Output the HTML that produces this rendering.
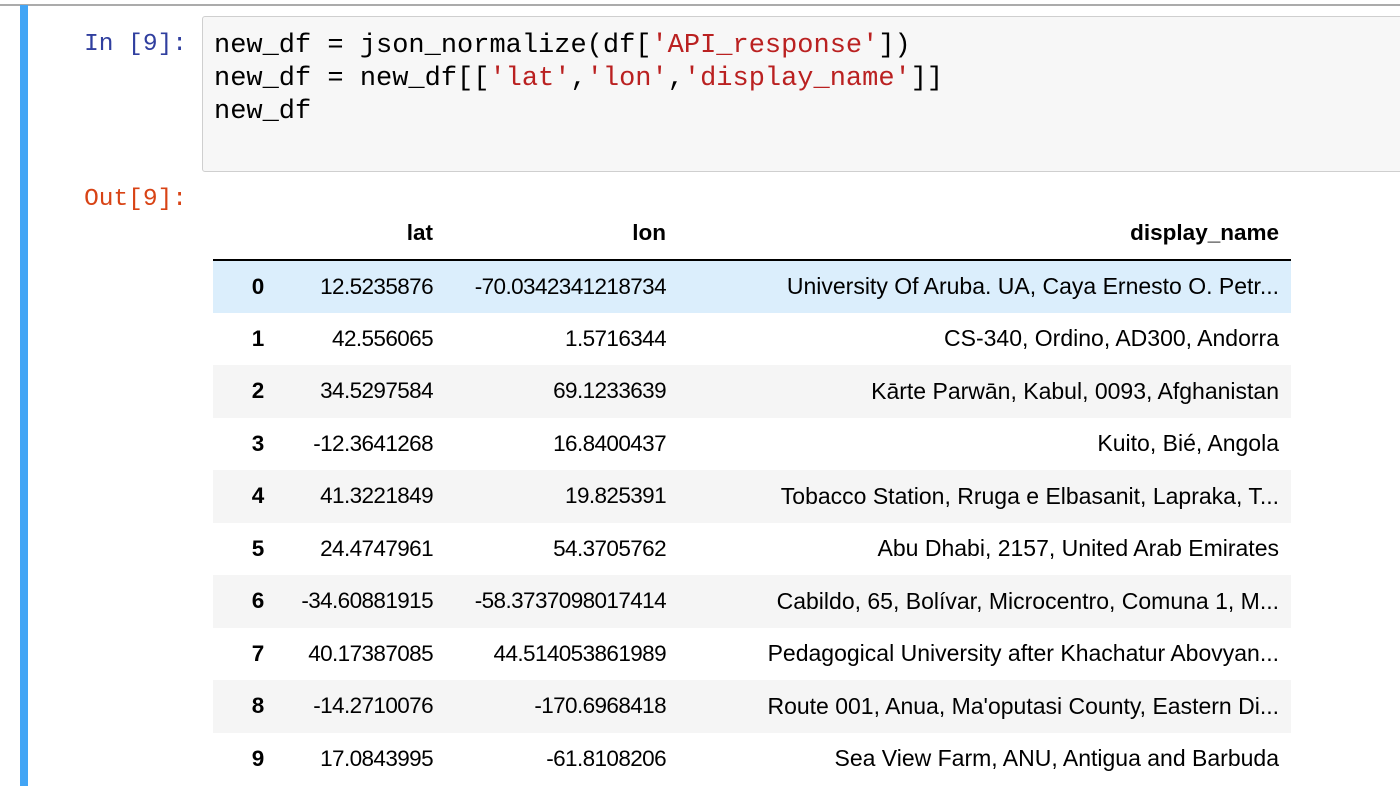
<!DOCTYPE html><html><head><style>
html,body{margin:0;width:1400px;height:786px;overflow:hidden;background:#fff;position:relative;font-family:"Liberation Sans",sans-serif}
.top{position:absolute;left:0;top:4px;width:1400px;height:2px;background:#ababab}
.bar{position:absolute;left:20px;top:5px;width:8px;height:781px;background:#42a5f5}
.pr{position:absolute;font-family:"Liberation Mono",monospace;font-size:24.5px;text-align:right;width:200px}
.code{position:absolute;left:202px;top:16px;width:1210px;height:156px;border:1px solid #cfcfcf;background:#f7f7f7;border-radius:3px;box-sizing:border-box}
.code pre{margin:0;position:absolute;left:11px;top:13px;font-family:"Liberation Mono",monospace;font-size:27px;line-height:33px;color:#000}
.s{color:#ba2121}
table{position:absolute;left:213px;top:207px;border-collapse:collapse;table-layout:fixed;width:1078px;font-size:22.5px;color:#000}
td,th{text-align:right;height:52.5px;padding:0 12px 0 0;box-sizing:border-box;white-space:nowrap;overflow:hidden}
th{font-weight:bold}
thead th{height:53px;border-bottom:2px solid #000}
tbody tr:nth-child(odd){background:#f5f5f5}
tbody tr:first-child{background:#dbeefc}
tbody th{text-align:center;padding:0 0 0 14px}
tbody td{letter-spacing:-0.6px}
tbody td:last-child{letter-spacing:0;font-size:23px}
</style></head><body>
<div class="top"></div><div class="bar"></div>
<div class="pr" style="left:-13px;top:31px;color:#303f9f">In [9]:</div>
<div class="pr" style="left:-13px;top:186px;color:#d84315">Out[9]:</div>
<div class="code"><pre>new_df = json_normalize(df[<span class="s">'API_response'</span>])
new_df = new_df[[<span class="s">'lat'</span>,<span class="s">'lon'</span>,<span class="s">'display_name'</span>]]
new_df</pre></div>
<table><colgroup><col style="width:76px"><col style="width:156px"><col style="width:233px"><col style="width:613px"></colgroup>
<thead><tr><th></th><th>lat</th><th>lon</th><th>display_name</th></tr></thead>
<tbody>
<tr><th>0</th><td>12.5235876</td><td>-70.0342341218734</td><td>University Of Aruba. UA, Caya Ernesto O. Petr...</td></tr>
<tr><th>1</th><td>42.556065</td><td>1.5716344</td><td>CS-340, Ordino, AD300, Andorra</td></tr>
<tr><th>2</th><td>34.5297584</td><td>69.1233639</td><td>Kārte Parwān, Kabul, 0093, Afghanistan</td></tr>
<tr><th>3</th><td>-12.3641268</td><td>16.8400437</td><td>Kuito, Bié, Angola</td></tr>
<tr><th>4</th><td>41.3221849</td><td>19.825391</td><td>Tobacco Station, Rruga e Elbasanit, Lapraka, T...</td></tr>
<tr><th>5</th><td>24.4747961</td><td>54.3705762</td><td>Abu Dhabi, 2157, United Arab Emirates</td></tr>
<tr><th>6</th><td>-34.60881915</td><td>-58.3737098017414</td><td>Cabildo, 65, Bolívar, Microcentro, Comuna 1, M...</td></tr>
<tr><th>7</th><td>40.17387085</td><td>44.514053861989</td><td>Pedagogical University after Khachatur Abovyan...</td></tr>
<tr><th>8</th><td>-14.2710076</td><td>-170.6968418</td><td>Route 001, Anua, Ma'oputasi County, Eastern Di...</td></tr>
<tr><th>9</th><td>17.0843995</td><td>-61.8108206</td><td>Sea View Farm, ANU, Antigua and Barbuda</td></tr>
</tbody></table>
</body></html>
